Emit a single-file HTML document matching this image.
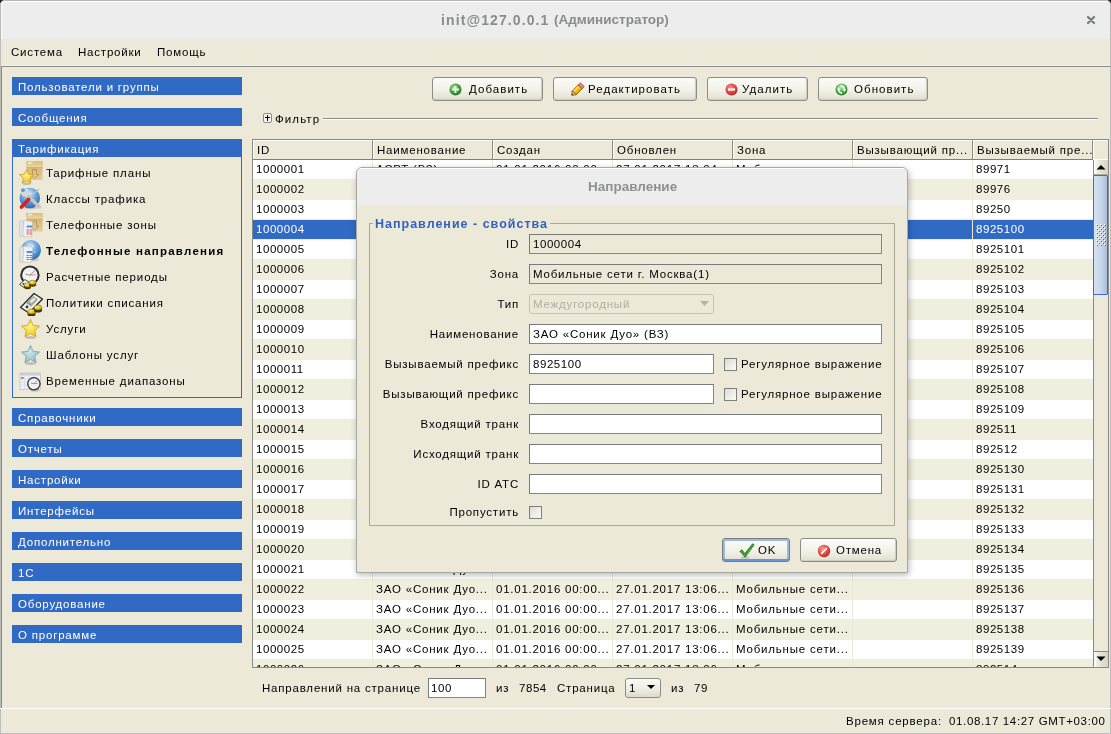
<!DOCTYPE html>
<html><head><meta charset="utf-8">
<style>
*{box-sizing:border-box;margin:0;padding:0}
html,body{width:1111px;height:734px;overflow:hidden;background:#1c1c1c}
body{font-family:"Liberation Sans",sans-serif;font-size:11.5px;letter-spacing:0.8px;color:#000;position:relative}
.a{position:absolute}
.t{position:absolute;white-space:pre;line-height:14px}
.d{letter-spacing:0.55px}
#win{position:absolute;left:0;top:0;width:1111px;height:734px;background:#ECE9D8;border-radius:5px 5px 0 0;overflow:hidden;will-change:transform}
#title{position:absolute;left:0;top:0;width:1111px;height:39px;background:#EDEDED;border:1px solid #b5b5b5;border-bottom:0;border-radius:5px 5px 0 0;box-shadow:inset 1px 1px 0 #fff}
.bar{position:absolute;left:12px;width:230px;height:18px;background:#316AC5;color:#fff}
.bar span{position:absolute;left:6px;top:3px;white-space:pre;line-height:14px}
.btn{position:absolute;height:24px;border:1px solid #8d8d86;border-radius:3px;background:linear-gradient(#fbfbf8,#f3f1e8 55%,#e2dfd1);box-shadow:inset -1px -1px 1px #cfcbbb}
.btn span{position:absolute;white-space:pre;top:4px;line-height:14px;letter-spacing:1.05px}
.btn svg{position:absolute}
.hd{position:absolute;top:140px;height:20px;background:#ECE9D8;border-bottom:1px solid #7f7f7a;border-right:1px solid #8a8a84;box-shadow:inset 1px 1px 0 #fff}
.hd span{position:absolute;left:4px;top:3px;white-space:pre;line-height:14px}
.row{position:absolute;left:0;width:840px;height:20px;border-bottom:1px solid #EFEDDC}
.row span{position:absolute;top:2px;white-space:pre;line-height:14px}
.vl{position:absolute;top:0;width:1px;height:507px;background:#ECE9D8}
.tf{position:absolute;height:20px;background:#fff;border:1px solid #7a7a7a;border-right-color:#858585;border-bottom-color:#858585}
.tf span{position:absolute;left:3px;top:2px;white-space:pre;line-height:14px}
.lbl{position:absolute;white-space:pre;line-height:14px;text-align:right}
.cb{position:absolute;width:13px;height:13px;border:1px solid #7f7f7c;background:linear-gradient(135deg,#dedbd0,#fcfcfa)}
</style></head><body>
<div id="win">
<div id="title"></div>
<div class="t" style="left:441px;top:13px;font-weight:bold;font-size:14px;letter-spacing:1.1px;color:#8a8c8c">init@127.0.0.1</div>
<div class="t" style="left:554px;top:13px;font-weight:bold;font-size:13.5px;letter-spacing:0px;color:#8a8c8c">(Администратор)</div>
<svg class="a" style="left:1086px;top:15px" width="10" height="10" viewBox="0 0 10 10"><path d="M2 2L8 8M8 2L2 8" stroke="#7b7e7e" stroke-width="2.3" stroke-linecap="round"/></svg>
<div class="t" style="left:11px;top:45px">Система</div>
<div class="t" style="left:78px;top:45px">Настройки</div>
<div class="t" style="left:157px;top:45px">Помощь</div>
<div class="a" style="left:0;top:65px;width:1111px;height:1px;background:#f7f5ea"></div>
<div class="a" style="left:1px;top:66px;width:1110px;height:1px;background:#8a8a8a"></div>
<div class="a" style="left:1px;top:66px;width:1px;height:642px;background:#8a8a8a"></div>
<div class="a" style="left:0;top:39px;width:1px;height:695px;background:#bdbdbd"></div>
<div class="a" style="left:1110px;top:39px;width:1px;height:695px;background:#bdbdbd"></div>
<div class="a" style="left:0;top:708px;width:1111px;height:1px;background:#fff"></div>
<div class="a" style="left:0;top:733px;width:1111px;height:1px;background:#bdbdbd"></div>
<div class="bar" style="top:77px"><span>Пользователи и группы</span></div>
<div class="bar" style="top:108px"><span>Сообщения</span></div>
<div class="bar" style="top:139px"><span>Тарификация</span></div>
<div class="a" style="left:12px;top:157px;width:230px;height:241px;border:1px solid #316AC5;border-top:0"></div>
<div class="bar" style="top:408px"><span>Справочники</span></div>
<div class="bar" style="top:439px"><span>Отчеты</span></div>
<div class="bar" style="top:470px"><span>Настройки</span></div>
<div class="bar" style="top:501px"><span>Интерфейсы</span></div>
<div class="bar" style="top:532px"><span>Дополнительно</span></div>
<div class="bar" style="top:563px"><span>1С</span></div>
<div class="bar" style="top:594px"><span>Оборудование</span></div>
<div class="bar" style="top:625px"><span>О программе</span></div>
<div class="t" style="left:46px;top:166px;letter-spacing:0.85px">Тарифные планы</div>
<div class="t" style="left:46px;top:192px;letter-spacing:0.85px">Классы трафика</div>
<div class="t" style="left:46px;top:218px;letter-spacing:0.85px">Телефонные зоны</div>
<div class="t" style="left:46px;top:244px;font-weight:bold;letter-spacing:1.22px">Телефонные направления</div>
<div class="t" style="left:46px;top:270px;letter-spacing:0.85px">Расчетные периоды</div>
<div class="t" style="left:46px;top:296px;letter-spacing:0.85px">Политики списания</div>
<div class="t" style="left:46px;top:322px;letter-spacing:0.85px">Услуги</div>
<div class="t" style="left:46px;top:348px;letter-spacing:0.85px">Шаблоны услуг</div>
<div class="t" style="left:46px;top:374px;letter-spacing:0.85px">Временные диапазоны</div>
<svg class="a" style="left:18px;top:160px" width="26" height="26" viewBox="0 0 26 26"><defs><linearGradient id="bxf" x1="0" y1="0" x2="0" y2="1"><stop offset="0" stop-color="#d2ad68"/><stop offset="1" stop-color="#e6cd95"/></linearGradient><linearGradient id="bxt" x1="0" y1="0" x2="0" y2="1"><stop offset="0" stop-color="#d9b979"/><stop offset="1" stop-color="#efd9a6"/></linearGradient><radialGradient id="glb" cx="0.45" cy="0.3" r="0.75"><stop offset="0" stop-color="#d5ecfb"/><stop offset="0.45" stop-color="#6aa7dc"/><stop offset="1" stop-color="#2563ad"/></radialGradient><radialGradient id="sty" cx="0.45" cy="0.35" r="0.7"><stop offset="0" stop-color="#fdf48a"/><stop offset="1" stop-color="#ecc818"/></radialGradient><radialGradient id="stt" cx="0.45" cy="0.35" r="0.7"><stop offset="0" stop-color="#cfe6ea"/><stop offset="1" stop-color="#8cb9c0"/></radialGradient><radialGradient id="coin" cx="0.4" cy="0.35" r="0.7"><stop offset="0" stop-color="#fbef6a"/><stop offset="1" stop-color="#c9a20a"/></radialGradient></defs><rect x="8.5" y="1.5" width="16" height="18.5" fill="url(#bxf)"/><rect x="8.5" y="1.5" width="16" height="6" fill="url(#bxt)"/><path d="M8.5 7.5h16" stroke="#c8a561" stroke-width="0.6"/><rect x="10.0" y="2.3" width="4.5" height="1.6" fill="#eeeae0"/><path d="M14.5 9.5v5h-2.5l4.5 4 4.5-4h-2.5v-5z" fill="none" stroke="#a88a50" stroke-width="0.7"/><ellipse cx="8.6" cy="23.75" rx="4.125" ry="1.3" fill="rgba(0,0,0,0.2)"/><polygon points="8.60,9.50 10.67,14.15 15.73,14.68 11.95,18.09 13.01,23.07 8.60,20.52 4.19,23.07 5.25,18.09 1.47,14.68 6.53,14.15" fill="url(#sty)" stroke="#d9a21c" stroke-width="0.9" stroke-linejoin="round"/></svg>
<svg class="a" style="left:18px;top:186px" width="26" height="26" viewBox="0 0 26 26"><defs><linearGradient id="bxf" x1="0" y1="0" x2="0" y2="1"><stop offset="0" stop-color="#d2ad68"/><stop offset="1" stop-color="#e6cd95"/></linearGradient><linearGradient id="bxt" x1="0" y1="0" x2="0" y2="1"><stop offset="0" stop-color="#d9b979"/><stop offset="1" stop-color="#efd9a6"/></linearGradient><radialGradient id="glb" cx="0.45" cy="0.3" r="0.75"><stop offset="0" stop-color="#d5ecfb"/><stop offset="0.45" stop-color="#6aa7dc"/><stop offset="1" stop-color="#2563ad"/></radialGradient><radialGradient id="sty" cx="0.45" cy="0.35" r="0.7"><stop offset="0" stop-color="#fdf48a"/><stop offset="1" stop-color="#ecc818"/></radialGradient><radialGradient id="stt" cx="0.45" cy="0.35" r="0.7"><stop offset="0" stop-color="#cfe6ea"/><stop offset="1" stop-color="#8cb9c0"/></radialGradient><radialGradient id="coin" cx="0.4" cy="0.35" r="0.7"><stop offset="0" stop-color="#fbef6a"/><stop offset="1" stop-color="#c9a20a"/></radialGradient></defs><ellipse cx="12.8" cy="21.8" rx="7.21" ry="1.5" fill="rgba(0,0,0,0.15)"/><circle cx="11.8" cy="12" r="10.3" fill="url(#glb)"/><circle cx="13.8" cy="8" r="0.8" fill="#fff"/><circle cx="15.8" cy="14" r="0.7" fill="#fff"/><path d="M9 9L21.5 21" stroke="#c5c5c5" stroke-width="3.4" stroke-linecap="round"/><circle cx="7" cy="6.5" r="4" fill="#d8d8d8"/><circle cx="5" cy="4.2" r="1.9" fill="#5d9ad8"/><path d="M12 11L21 3" stroke="#bdbdbd" stroke-width="1.4"/><path d="M3.5 21L10.5 13.5" stroke="#e01f1f" stroke-width="3.8" stroke-linecap="round"/></svg>
<svg class="a" style="left:18px;top:212px" width="26" height="26" viewBox="0 0 26 26"><defs><linearGradient id="bxf" x1="0" y1="0" x2="0" y2="1"><stop offset="0" stop-color="#d2ad68"/><stop offset="1" stop-color="#e6cd95"/></linearGradient><linearGradient id="bxt" x1="0" y1="0" x2="0" y2="1"><stop offset="0" stop-color="#d9b979"/><stop offset="1" stop-color="#efd9a6"/></linearGradient><radialGradient id="glb" cx="0.45" cy="0.3" r="0.75"><stop offset="0" stop-color="#d5ecfb"/><stop offset="0.45" stop-color="#6aa7dc"/><stop offset="1" stop-color="#2563ad"/></radialGradient><radialGradient id="sty" cx="0.45" cy="0.35" r="0.7"><stop offset="0" stop-color="#fdf48a"/><stop offset="1" stop-color="#ecc818"/></radialGradient><radialGradient id="stt" cx="0.45" cy="0.35" r="0.7"><stop offset="0" stop-color="#cfe6ea"/><stop offset="1" stop-color="#8cb9c0"/></radialGradient><radialGradient id="coin" cx="0.4" cy="0.35" r="0.7"><stop offset="0" stop-color="#fbef6a"/><stop offset="1" stop-color="#c9a20a"/></radialGradient></defs><rect x="8.5" y="1" width="16" height="18.5" fill="url(#bxf)"/><rect x="8.5" y="1" width="16" height="6" fill="url(#bxt)"/><path d="M8.5 7h16" stroke="#c8a561" stroke-width="0.6"/><rect x="10.0" y="1.8" width="4.5" height="1.6" fill="#eeeae0"/><path d="M14.5 9v5h-2.5l4.5 4 4.5-4h-2.5v-5z" fill="none" stroke="#a88a50" stroke-width="0.7"/><path d="M1.7 10.0q1.5-1.5 4 -1 v15 q-2 1-4 0z" fill="#e4e5e8" stroke="#b5b7bb" stroke-width="0.6"/><path d="M5.7 8.5l9 1-1 15.5-9-0.5z" fill="#eef0f3" stroke="#b9bcc1" stroke-width="0.6"/><path d="M8.7 13.5h5.5v2h-5.5z" fill="#4d8fe0"/><path d="M8.7 18.0h2M11.7 18.0h2M8.7 20.0h2M11.7 20.0h2M8.7 22.0h2M11.7 22.0h2" stroke="#e23a3a" stroke-width="1.2"/></svg>
<svg class="a" style="left:18px;top:238px" width="26" height="26" viewBox="0 0 26 26"><defs><linearGradient id="bxf" x1="0" y1="0" x2="0" y2="1"><stop offset="0" stop-color="#d2ad68"/><stop offset="1" stop-color="#e6cd95"/></linearGradient><linearGradient id="bxt" x1="0" y1="0" x2="0" y2="1"><stop offset="0" stop-color="#d9b979"/><stop offset="1" stop-color="#efd9a6"/></linearGradient><radialGradient id="glb" cx="0.45" cy="0.3" r="0.75"><stop offset="0" stop-color="#d5ecfb"/><stop offset="0.45" stop-color="#6aa7dc"/><stop offset="1" stop-color="#2563ad"/></radialGradient><radialGradient id="sty" cx="0.45" cy="0.35" r="0.7"><stop offset="0" stop-color="#fdf48a"/><stop offset="1" stop-color="#ecc818"/></radialGradient><radialGradient id="stt" cx="0.45" cy="0.35" r="0.7"><stop offset="0" stop-color="#cfe6ea"/><stop offset="1" stop-color="#8cb9c0"/></radialGradient><radialGradient id="coin" cx="0.4" cy="0.35" r="0.7"><stop offset="0" stop-color="#fbef6a"/><stop offset="1" stop-color="#c9a20a"/></radialGradient></defs><ellipse cx="13.9" cy="21.7" rx="7.069999999999999" ry="1.5" fill="rgba(0,0,0,0.15)"/><circle cx="12.9" cy="12.1" r="10.1" fill="url(#glb)"/><circle cx="14.9" cy="8.1" r="0.8" fill="#fff"/><circle cx="16.9" cy="14.1" r="0.7" fill="#fff"/><path d="M1.7 9.5q1.5-1.5 4 -1 v15 q-2 1-4 0z" fill="#e4e5e8" stroke="#b5b7bb" stroke-width="0.6"/><path d="M5.7 8l9 1-1 15.5-9-0.5z" fill="#eef0f3" stroke="#b9bcc1" stroke-width="0.6"/><path d="M8.7 13h5.5v2h-5.5z" fill="#4d8fe0"/><path d="M8.7 17.5h2M11.7 17.5h2M8.7 19.5h2M11.7 19.5h2M8.7 21.5h2M11.7 21.5h2" stroke="#e23a3a" stroke-width="1.2"/></svg>
<svg class="a" style="left:18px;top:264px" width="26" height="26" viewBox="0 0 26 26"><defs><linearGradient id="bxf" x1="0" y1="0" x2="0" y2="1"><stop offset="0" stop-color="#d2ad68"/><stop offset="1" stop-color="#e6cd95"/></linearGradient><linearGradient id="bxt" x1="0" y1="0" x2="0" y2="1"><stop offset="0" stop-color="#d9b979"/><stop offset="1" stop-color="#efd9a6"/></linearGradient><radialGradient id="glb" cx="0.45" cy="0.3" r="0.75"><stop offset="0" stop-color="#d5ecfb"/><stop offset="0.45" stop-color="#6aa7dc"/><stop offset="1" stop-color="#2563ad"/></radialGradient><radialGradient id="sty" cx="0.45" cy="0.35" r="0.7"><stop offset="0" stop-color="#fdf48a"/><stop offset="1" stop-color="#ecc818"/></radialGradient><radialGradient id="stt" cx="0.45" cy="0.35" r="0.7"><stop offset="0" stop-color="#cfe6ea"/><stop offset="1" stop-color="#8cb9c0"/></radialGradient><radialGradient id="coin" cx="0.4" cy="0.35" r="0.7"><stop offset="0" stop-color="#fbef6a"/><stop offset="1" stop-color="#c9a20a"/></radialGradient></defs><ellipse cx="12.9" cy="20.9" rx="6.789999999999999" ry="1.3" fill="rgba(0,0,0,0.15)"/><circle cx="11.9" cy="11.2" r="9.7" fill="#2e2e2e"/><circle cx="11.9" cy="11.2" r="7.699999999999999" fill="#f2f2f2"/><path d="M11.9 11.2L17.235 6.35M11.9 11.2L7.535 10.229999999999999" stroke="#666" stroke-width="0.7"/><path d="M11.9 11.2L17.72 10.715" stroke="#d44" stroke-width="0.6"/><path d="M1.5 20.5L7 15.5 11.5 18.5 6 23.5z" fill="#eef1ea" stroke="#333" stroke-width="0.9"/><circle cx="5.5" cy="20" r="1" fill="#333"/><path d="M6 21v2a3.5 2.2 0 0 0 7 0v-2z" fill="#3b3300"/><ellipse cx="9.5" cy="21" rx="3.5" ry="2.2" fill="url(#coin)" stroke="#7a6200" stroke-width="0.5"/><path d="M11 18.5v2a3.5 2.2 0 0 0 7 0v-2z" fill="#3b3300"/><ellipse cx="14.5" cy="18.5" rx="3.5" ry="2.2" fill="url(#coin)" stroke="#7a6200" stroke-width="0.5"/></svg>
<svg class="a" style="left:18px;top:290px" width="26" height="26" viewBox="0 0 26 26"><defs><linearGradient id="bxf" x1="0" y1="0" x2="0" y2="1"><stop offset="0" stop-color="#d2ad68"/><stop offset="1" stop-color="#e6cd95"/></linearGradient><linearGradient id="bxt" x1="0" y1="0" x2="0" y2="1"><stop offset="0" stop-color="#d9b979"/><stop offset="1" stop-color="#efd9a6"/></linearGradient><radialGradient id="glb" cx="0.45" cy="0.3" r="0.75"><stop offset="0" stop-color="#d5ecfb"/><stop offset="0.45" stop-color="#6aa7dc"/><stop offset="1" stop-color="#2563ad"/></radialGradient><radialGradient id="sty" cx="0.45" cy="0.35" r="0.7"><stop offset="0" stop-color="#fdf48a"/><stop offset="1" stop-color="#ecc818"/></radialGradient><radialGradient id="stt" cx="0.45" cy="0.35" r="0.7"><stop offset="0" stop-color="#cfe6ea"/><stop offset="1" stop-color="#8cb9c0"/></radialGradient><radialGradient id="coin" cx="0.4" cy="0.35" r="0.7"><stop offset="0" stop-color="#fbef6a"/><stop offset="1" stop-color="#c9a20a"/></radialGradient></defs><path d="M2.5 17.5L16 3.5 24.5 9 11 23z" fill="#eef1ea" stroke="#262626" stroke-width="1.3" stroke-linejoin="round"/><path d="M8 13L15 6 20 9.5 13 16.5z" fill="#9a9c96"/><path d="M11 11.5L15.5 7.5 18 9.2 13.5 13.5z" fill="#dfe3da"/><circle cx="9" cy="17" r="1.4" fill="#333"/><path d="M9.5 21.5v2.5a4 2.6 0 0 0 8 0v-2.5z" fill="#3b3300"/><ellipse cx="13.5" cy="21.5" rx="4" ry="2.6" fill="url(#coin)" stroke="#7a6200" stroke-width="0.5"/><path d="M16 17.5v2.5a4 2.6 0 0 0 8 0v-2.5z" fill="#3b3300"/><ellipse cx="20" cy="17.5" rx="4" ry="2.6" fill="url(#coin)" stroke="#7a6200" stroke-width="0.5"/></svg>
<svg class="a" style="left:18px;top:316px" width="26" height="26" viewBox="0 0 26 26"><defs><linearGradient id="bxf" x1="0" y1="0" x2="0" y2="1"><stop offset="0" stop-color="#d2ad68"/><stop offset="1" stop-color="#e6cd95"/></linearGradient><linearGradient id="bxt" x1="0" y1="0" x2="0" y2="1"><stop offset="0" stop-color="#d9b979"/><stop offset="1" stop-color="#efd9a6"/></linearGradient><radialGradient id="glb" cx="0.45" cy="0.3" r="0.75"><stop offset="0" stop-color="#d5ecfb"/><stop offset="0.45" stop-color="#6aa7dc"/><stop offset="1" stop-color="#2563ad"/></radialGradient><radialGradient id="sty" cx="0.45" cy="0.35" r="0.7"><stop offset="0" stop-color="#fdf48a"/><stop offset="1" stop-color="#ecc818"/></radialGradient><radialGradient id="stt" cx="0.45" cy="0.35" r="0.7"><stop offset="0" stop-color="#cfe6ea"/><stop offset="1" stop-color="#8cb9c0"/></radialGradient><radialGradient id="coin" cx="0.4" cy="0.35" r="0.7"><stop offset="0" stop-color="#fbef6a"/><stop offset="1" stop-color="#c9a20a"/></radialGradient></defs><ellipse cx="12.5" cy="21.55" rx="5.2250000000000005" ry="1.3" fill="rgba(0,0,0,0.2)"/><polygon points="12.50,3.50 15.12,9.39 21.54,10.06 16.75,14.38 18.08,20.69 12.50,17.46 6.92,20.69 8.25,14.38 3.46,10.06 9.88,9.39" fill="url(#sty)" stroke="#d9a21c" stroke-width="0.9" stroke-linejoin="round"/></svg>
<svg class="a" style="left:18px;top:342px" width="26" height="26" viewBox="0 0 26 26"><defs><linearGradient id="bxf" x1="0" y1="0" x2="0" y2="1"><stop offset="0" stop-color="#d2ad68"/><stop offset="1" stop-color="#e6cd95"/></linearGradient><linearGradient id="bxt" x1="0" y1="0" x2="0" y2="1"><stop offset="0" stop-color="#d9b979"/><stop offset="1" stop-color="#efd9a6"/></linearGradient><radialGradient id="glb" cx="0.45" cy="0.3" r="0.75"><stop offset="0" stop-color="#d5ecfb"/><stop offset="0.45" stop-color="#6aa7dc"/><stop offset="1" stop-color="#2563ad"/></radialGradient><radialGradient id="sty" cx="0.45" cy="0.35" r="0.7"><stop offset="0" stop-color="#fdf48a"/><stop offset="1" stop-color="#ecc818"/></radialGradient><radialGradient id="stt" cx="0.45" cy="0.35" r="0.7"><stop offset="0" stop-color="#cfe6ea"/><stop offset="1" stop-color="#8cb9c0"/></radialGradient><radialGradient id="coin" cx="0.4" cy="0.35" r="0.7"><stop offset="0" stop-color="#fbef6a"/><stop offset="1" stop-color="#c9a20a"/></radialGradient></defs><ellipse cx="12.5" cy="21.55" rx="5.2250000000000005" ry="1.3" fill="rgba(0,0,0,0.2)"/><polygon points="12.50,3.50 15.12,9.39 21.54,10.06 16.75,14.38 18.08,20.69 12.50,17.46 6.92,20.69 8.25,14.38 3.46,10.06 9.88,9.39" fill="url(#stt)" stroke="#79a5ab" stroke-width="0.9" stroke-linejoin="round"/></svg>
<svg class="a" style="left:18px;top:368px" width="26" height="26" viewBox="0 0 26 26"><defs><linearGradient id="bxf" x1="0" y1="0" x2="0" y2="1"><stop offset="0" stop-color="#d2ad68"/><stop offset="1" stop-color="#e6cd95"/></linearGradient><linearGradient id="bxt" x1="0" y1="0" x2="0" y2="1"><stop offset="0" stop-color="#d9b979"/><stop offset="1" stop-color="#efd9a6"/></linearGradient><radialGradient id="glb" cx="0.45" cy="0.3" r="0.75"><stop offset="0" stop-color="#d5ecfb"/><stop offset="0.45" stop-color="#6aa7dc"/><stop offset="1" stop-color="#2563ad"/></radialGradient><radialGradient id="sty" cx="0.45" cy="0.35" r="0.7"><stop offset="0" stop-color="#fdf48a"/><stop offset="1" stop-color="#ecc818"/></radialGradient><radialGradient id="stt" cx="0.45" cy="0.35" r="0.7"><stop offset="0" stop-color="#cfe6ea"/><stop offset="1" stop-color="#8cb9c0"/></radialGradient><radialGradient id="coin" cx="0.4" cy="0.35" r="0.7"><stop offset="0" stop-color="#fbef6a"/><stop offset="1" stop-color="#c9a20a"/></radialGradient></defs><rect x="2" y="5" width="20.5" height="16.5" fill="#eef0f7" stroke="#b9bdc8" stroke-width="0.7"/><rect x="2" y="5" width="20.5" height="2.5" fill="#c9cdd8"/><path d="M2 11h20.5M2 14h20.5M2 17h20.5M6.5 7.5v14M11 7.5v14M15.5 7.5v14" stroke="#d2d6e0" stroke-width="0.6"/><rect x="3" y="9" width="2.6" height="1.8" fill="#f06060"/><ellipse cx="16.9" cy="22.5" rx="4.76" ry="1.3" fill="rgba(0,0,0,0.15)"/><circle cx="15.9" cy="15.7" r="6.8" fill="#2e2e2e"/><circle cx="15.9" cy="15.7" r="5.5" fill="#f2f2f2"/><path d="M15.9 15.7L19.64 12.299999999999999M15.9 15.7L12.84 15.02" stroke="#666" stroke-width="0.7"/><path d="M15.9 15.7L19.98 15.36" stroke="#d44" stroke-width="0.6"/></svg>
<div class="btn" style="left:432px;top:77px;width:111px"><svg style="left:16px;top:5px" width="13" height="13" viewBox="0 0 13 13"><defs><radialGradient id="g1" cx="0.4" cy="0.35" r="0.7"><stop offset="0" stop-color="#b9e8a8"/><stop offset="0.5" stop-color="#48a843"/><stop offset="1" stop-color="#1d7424"/></radialGradient></defs><circle cx="6.5" cy="6.5" r="6" fill="url(#g1)"/><path d="M6.5 3v7M3 6.5h7" stroke="#f4f4f4" stroke-width="1.8"/></svg><span style="left:36px">Добавить</span></div>
<div class="btn" style="left:553px;top:77px;width:144px"><svg style="left:15px;top:4px" width="16" height="16" viewBox="0 0 16 16"><defs><linearGradient id="pg" x1="0" y1="0" x2="0" y2="1"><stop offset="0" stop-color="#fff27a"/><stop offset="0.5" stop-color="#f7c600"/><stop offset="1" stop-color="#e0a000"/></linearGradient></defs><g transform="rotate(-45 8 8)"><path d="M4 5.3h8.5v5.4H4z" fill="url(#pg)" stroke="#8a5a00" stroke-width="0.9"/><path d="M12.5 5.3h2.2a0.8 0.8 0 0 1 0.8 0.8v3.8a0.8 0.8 0 0 1-0.8 0.8h-2.2z" fill="#f47ad0" stroke="#8a5a00" stroke-width="0.9"/><path d="M4 5.3L0.6 8 4 10.7z" fill="#f3dc9a" stroke="#8a5a00" stroke-width="0.9" stroke-linejoin="round"/><path d="M0.6 8L1.9 7v2z" fill="#223"/></g></svg><span style="left:34px">Редактировать</span></div>
<div class="btn" style="left:707px;top:77px;width:101px"><svg style="left:17px;top:5px" width="13" height="13" viewBox="0 0 13 13"><defs><radialGradient id="g2" cx="0.4" cy="0.35" r="0.7"><stop offset="0" stop-color="#ff8a8a"/><stop offset="1" stop-color="#c01818"/></radialGradient></defs><circle cx="6.5" cy="6.5" r="6" fill="url(#g2)"/><path d="M3 6.5h7" stroke="#fff" stroke-width="2.2"/></svg><span style="left:34px">Удалить</span></div>
<div class="btn" style="left:818px;top:77px;width:110px"><svg style="left:16px;top:5px" width="13" height="13" viewBox="0 0 13 13"><defs><radialGradient id="g3" cx="0.45" cy="0.3" r="0.75"><stop offset="0" stop-color="#c6eeb8"/><stop offset="0.5" stop-color="#4fb04a"/><stop offset="1" stop-color="#1d7424"/></radialGradient></defs><circle cx="6.5" cy="6.5" r="6" fill="url(#g3)"/><path d="M3.6 6.2A3.3 3.3 0 0 0 7.2 10" stroke="#fff" stroke-width="1.5" fill="none"/><path d="M1.9 6.8L3.6 4 5.3 6.8z" fill="#fff"/><path d="M9.4 6.8A3.3 3.3 0 0 0 5.8 3" stroke="#fff" stroke-width="1.5" fill="none"/><path d="M7.7 6.2L9.4 9 11.1 6.2z" fill="#fff"/></svg><span style="left:35px">Обновить</span></div>
<div class="a" style="left:263px;top:113px;width:9px;height:10px;border:1px solid #8a8a8a;border-radius:2px;background:#f4f3ee"></div>
<div class="a" style="left:265px;top:117px;width:5px;height:1px;background:#000"></div>
<div class="a" style="left:267px;top:115px;width:1px;height:6px;background:#000"></div>
<div class="t" style="left:275px;top:112px;letter-spacing:1.1px">Фильтр</div>
<div class="a" style="left:323px;top:118px;width:775px;height:1px;background:#8a8a8a"></div>
<div class="a" style="left:323px;top:119px;width:775px;height:1px;background:#fff"></div>
<div class="a" style="left:252px;top:139px;width:857px;height:529px;border:1px solid #8a8a84;background:#fff"></div>
<div class="a" style="left:1092px;top:140px;width:16px;height:527px;background:#ECE9D8"></div>
<div class="hd" style="left:253px;width:120px"><span>ID</span></div>
<div class="hd" style="left:373px;width:120px"><span>Наименование</span></div>
<div class="hd" style="left:493px;width:120px"><span>Создан</span></div>
<div class="hd" style="left:613px;width:120px"><span>Обновлен</span></div>
<div class="hd" style="left:733px;width:120px"><span>Зона</span></div>
<div class="hd" style="left:853px;width:120px"><span>Вызывающий пр...</span></div>
<div class="hd" style="left:973px;width:120px"><span>Вызываемый пре...</span></div>
<div class="hd" style="left:1093px;width:15px;border-right:0;border-bottom-color:#fff"></div>
<div class="a" style="left:253px;top:160px;width:840px;height:507px;overflow:hidden">
<div class="row" style="top:0px;background:#fff;color:#000"><span class="d" style="left:3px">1000001</span><span style="left:123px">АСРТ (ВЗ)</span><span style="left:243px;letter-spacing:0.75px">01.01.2016 00:00...</span><span style="left:363px;letter-spacing:0.75px">27.01.2017 13:04...</span><span style="left:483px">Моб...</span><span class="d" style="left:723px">89971</span></div>
<div class="row" style="top:20px;background:#F0EEDC;color:#000"><span class="d" style="left:3px">1000002</span><span style="left:123px">ЗАО «Соник Дуо...</span><span style="left:243px;letter-spacing:0.75px">01.01.2016 00:00...</span><span style="left:363px;letter-spacing:0.75px">27.01.2017 13:06...</span><span style="left:483px">Мобильные сети...</span><span class="d" style="left:723px">89976</span></div>
<div class="row" style="top:40px;background:#fff;color:#000"><span class="d" style="left:3px">1000003</span><span style="left:123px">ЗАО «Соник Дуо...</span><span style="left:243px;letter-spacing:0.75px">01.01.2016 00:00...</span><span style="left:363px;letter-spacing:0.75px">27.01.2017 13:06...</span><span style="left:483px">Мобильные сети...</span><span class="d" style="left:723px">89250</span></div>
<div class="row" style="top:60px;background:#316AC5;color:#fff"><span class="d" style="left:3px">1000004</span><span style="left:123px">ЗАО «Соник Дуо...</span><span style="left:243px;letter-spacing:0.75px">01.01.2016 00:00...</span><span style="left:363px;letter-spacing:0.75px">27.01.2017 13:06...</span><span style="left:483px">Мобильные сети...</span><span class="d" style="left:723px">8925100</span></div>
<div class="row" style="top:80px;background:#fff;color:#000"><span class="d" style="left:3px">1000005</span><span style="left:123px">ЗАО «Соник Дуо...</span><span style="left:243px;letter-spacing:0.75px">01.01.2016 00:00...</span><span style="left:363px;letter-spacing:0.75px">27.01.2017 13:06...</span><span style="left:483px">Мобильные сети...</span><span class="d" style="left:723px">8925101</span></div>
<div class="row" style="top:100px;background:#F0EEDC;color:#000"><span class="d" style="left:3px">1000006</span><span style="left:123px">ЗАО «Соник Дуо...</span><span style="left:243px;letter-spacing:0.75px">01.01.2016 00:00...</span><span style="left:363px;letter-spacing:0.75px">27.01.2017 13:06...</span><span style="left:483px">Мобильные сети...</span><span class="d" style="left:723px">8925102</span></div>
<div class="row" style="top:120px;background:#fff;color:#000"><span class="d" style="left:3px">1000007</span><span style="left:123px">ЗАО «Соник Дуо...</span><span style="left:243px;letter-spacing:0.75px">01.01.2016 00:00...</span><span style="left:363px;letter-spacing:0.75px">27.01.2017 13:06...</span><span style="left:483px">Мобильные сети...</span><span class="d" style="left:723px">8925103</span></div>
<div class="row" style="top:140px;background:#F0EEDC;color:#000"><span class="d" style="left:3px">1000008</span><span style="left:123px">ЗАО «Соник Дуо...</span><span style="left:243px;letter-spacing:0.75px">01.01.2016 00:00...</span><span style="left:363px;letter-spacing:0.75px">27.01.2017 13:06...</span><span style="left:483px">Мобильные сети...</span><span class="d" style="left:723px">8925104</span></div>
<div class="row" style="top:160px;background:#fff;color:#000"><span class="d" style="left:3px">1000009</span><span style="left:123px">ЗАО «Соник Дуо...</span><span style="left:243px;letter-spacing:0.75px">01.01.2016 00:00...</span><span style="left:363px;letter-spacing:0.75px">27.01.2017 13:06...</span><span style="left:483px">Мобильные сети...</span><span class="d" style="left:723px">8925105</span></div>
<div class="row" style="top:180px;background:#F0EEDC;color:#000"><span class="d" style="left:3px">1000010</span><span style="left:123px">ЗАО «Соник Дуо...</span><span style="left:243px;letter-spacing:0.75px">01.01.2016 00:00...</span><span style="left:363px;letter-spacing:0.75px">27.01.2017 13:06...</span><span style="left:483px">Мобильные сети...</span><span class="d" style="left:723px">8925106</span></div>
<div class="row" style="top:200px;background:#fff;color:#000"><span class="d" style="left:3px">1000011</span><span style="left:123px">ЗАО «Соник Дуо...</span><span style="left:243px;letter-spacing:0.75px">01.01.2016 00:00...</span><span style="left:363px;letter-spacing:0.75px">27.01.2017 13:06...</span><span style="left:483px">Мобильные сети...</span><span class="d" style="left:723px">8925107</span></div>
<div class="row" style="top:220px;background:#F0EEDC;color:#000"><span class="d" style="left:3px">1000012</span><span style="left:123px">ЗАО «Соник Дуо...</span><span style="left:243px;letter-spacing:0.75px">01.01.2016 00:00...</span><span style="left:363px;letter-spacing:0.75px">27.01.2017 13:06...</span><span style="left:483px">Мобильные сети...</span><span class="d" style="left:723px">8925108</span></div>
<div class="row" style="top:240px;background:#fff;color:#000"><span class="d" style="left:3px">1000013</span><span style="left:123px">ЗАО «Соник Дуо...</span><span style="left:243px;letter-spacing:0.75px">01.01.2016 00:00...</span><span style="left:363px;letter-spacing:0.75px">27.01.2017 13:06...</span><span style="left:483px">Мобильные сети...</span><span class="d" style="left:723px">8925109</span></div>
<div class="row" style="top:260px;background:#F0EEDC;color:#000"><span class="d" style="left:3px">1000014</span><span style="left:123px">ЗАО «Соник Дуо...</span><span style="left:243px;letter-spacing:0.75px">01.01.2016 00:00...</span><span style="left:363px;letter-spacing:0.75px">27.01.2017 13:06...</span><span style="left:483px">Мобильные сети...</span><span class="d" style="left:723px">892511</span></div>
<div class="row" style="top:280px;background:#fff;color:#000"><span class="d" style="left:3px">1000015</span><span style="left:123px">ЗАО «Соник Дуо...</span><span style="left:243px;letter-spacing:0.75px">01.01.2016 00:00...</span><span style="left:363px;letter-spacing:0.75px">27.01.2017 13:06...</span><span style="left:483px">Мобильные сети...</span><span class="d" style="left:723px">892512</span></div>
<div class="row" style="top:300px;background:#F0EEDC;color:#000"><span class="d" style="left:3px">1000016</span><span style="left:123px">ЗАО «Соник Дуо...</span><span style="left:243px;letter-spacing:0.75px">01.01.2016 00:00...</span><span style="left:363px;letter-spacing:0.75px">27.01.2017 13:06...</span><span style="left:483px">Мобильные сети...</span><span class="d" style="left:723px">8925130</span></div>
<div class="row" style="top:320px;background:#fff;color:#000"><span class="d" style="left:3px">1000017</span><span style="left:123px">ЗАО «Соник Дуо...</span><span style="left:243px;letter-spacing:0.75px">01.01.2016 00:00...</span><span style="left:363px;letter-spacing:0.75px">27.01.2017 13:06...</span><span style="left:483px">Мобильные сети...</span><span class="d" style="left:723px">8925131</span></div>
<div class="row" style="top:340px;background:#F0EEDC;color:#000"><span class="d" style="left:3px">1000018</span><span style="left:123px">ЗАО «Соник Дуо...</span><span style="left:243px;letter-spacing:0.75px">01.01.2016 00:00...</span><span style="left:363px;letter-spacing:0.75px">27.01.2017 13:06...</span><span style="left:483px">Мобильные сети...</span><span class="d" style="left:723px">8925132</span></div>
<div class="row" style="top:360px;background:#fff;color:#000"><span class="d" style="left:3px">1000019</span><span style="left:123px">ЗАО «Соник Дуо...</span><span style="left:243px;letter-spacing:0.75px">01.01.2016 00:00...</span><span style="left:363px;letter-spacing:0.75px">27.01.2017 13:06...</span><span style="left:483px">Мобильные сети...</span><span class="d" style="left:723px">8925133</span></div>
<div class="row" style="top:380px;background:#F0EEDC;color:#000"><span class="d" style="left:3px">1000020</span><span style="left:123px">ЗАО «Соник Дуо...</span><span style="left:243px;letter-spacing:0.75px">01.01.2016 00:00...</span><span style="left:363px;letter-spacing:0.75px">27.01.2017 13:06...</span><span style="left:483px">Мобильные сети...</span><span class="d" style="left:723px">8925134</span></div>
<div class="row" style="top:400px;background:#fff;color:#000"><span class="d" style="left:3px">1000021</span><span style="left:123px">ЗАО «Соник Дуо...</span><span style="left:243px;letter-spacing:0.75px">01.01.2016 00:00...</span><span style="left:363px;letter-spacing:0.75px">27.01.2017 13:06...</span><span style="left:483px">Мобильные сети...</span><span class="d" style="left:723px">8925135</span></div>
<div class="row" style="top:420px;background:#F0EEDC;color:#000"><span class="d" style="left:3px">1000022</span><span style="left:123px">ЗАО «Соник Дуо...</span><span style="left:243px;letter-spacing:0.75px">01.01.2016 00:00...</span><span style="left:363px;letter-spacing:0.75px">27.01.2017 13:06...</span><span style="left:483px">Мобильные сети...</span><span class="d" style="left:723px">8925136</span></div>
<div class="row" style="top:440px;background:#fff;color:#000"><span class="d" style="left:3px">1000023</span><span style="left:123px">ЗАО «Соник Дуо...</span><span style="left:243px;letter-spacing:0.75px">01.01.2016 00:00...</span><span style="left:363px;letter-spacing:0.75px">27.01.2017 13:06...</span><span style="left:483px">Мобильные сети...</span><span class="d" style="left:723px">8925137</span></div>
<div class="row" style="top:460px;background:#F0EEDC;color:#000"><span class="d" style="left:3px">1000024</span><span style="left:123px">ЗАО «Соник Дуо...</span><span style="left:243px;letter-spacing:0.75px">01.01.2016 00:00...</span><span style="left:363px;letter-spacing:0.75px">27.01.2017 13:06...</span><span style="left:483px">Мобильные сети...</span><span class="d" style="left:723px">8925138</span></div>
<div class="row" style="top:480px;background:#fff;color:#000"><span class="d" style="left:3px">1000025</span><span style="left:123px">ЗАО «Соник Дуо...</span><span style="left:243px;letter-spacing:0.75px">01.01.2016 00:00...</span><span style="left:363px;letter-spacing:0.75px">27.01.2017 13:06...</span><span style="left:483px">Мобильные сети...</span><span class="d" style="left:723px">8925139</span></div>
<div class="row" style="top:500px;background:#F0EEDC;color:#000"><span class="d" style="left:3px">1000026</span><span style="left:123px">ЗАО «Соник Дуо...</span><span style="left:243px;letter-spacing:0.75px">01.01.2016 00:00...</span><span style="left:363px;letter-spacing:0.75px">27.01.2017 13:06...</span><span style="left:483px">Мобильные сети...</span><span class="d" style="left:723px">892514</span></div>
<div class="vl" style="left:119px"></div>
<div class="vl" style="left:239px"></div>
<div class="vl" style="left:359px"></div>
<div class="vl" style="left:479px"></div>
<div class="vl" style="left:599px"></div>
<div class="vl" style="left:719px"></div>
</div>
<div class="a" style="left:1093px;top:160px;width:15px;height:507px;background:#ECE9D8;border-left:1px solid #8a8a84"></div>
<div class="a" style="left:1094px;top:160px;width:14px;height:15px;background:linear-gradient(90deg,#fff,#ECE9D8 30%,#d8d4c4);border-bottom:1px solid #b0ad9f"></div>
<svg class="a" style="left:1096px;top:164px" width="10" height="6"><path d="M0.5 5.5L5 1 9.5 5.5z" fill="#000"/></svg>
<div class="a" style="left:1094px;top:651px;width:14px;height:16px;background:linear-gradient(90deg,#fff,#ECE9D8 30%,#d8d4c4);border-top:1px solid #8a8a84"></div>
<svg class="a" style="left:1096px;top:656px" width="10" height="6"><path d="M0.5 0.5L5 5 9.5 0.5z" fill="#000"/></svg>
<div class="a" style="left:1093px;top:175px;width:15px;height:120px;border:1px solid #3d6dd0;border-radius:1px;background:linear-gradient(90deg,#d6e2f2,#c4d3ea 60%,#a9bcd9)"></div>
<svg class="a" style="left:1093px;top:215px" width="16" height="40"><rect x="3" y="9" width="1" height="1" fill="#fff"/><rect x="4" y="10" width="1" height="1" fill="#3d6cd0"/><rect x="7" y="9" width="1" height="1" fill="#fff"/><rect x="8" y="10" width="1" height="1" fill="#3d6cd0"/><rect x="11" y="9" width="1" height="1" fill="#fff"/><rect x="12" y="10" width="1" height="1" fill="#3d6cd0"/><rect x="5" y="11" width="1" height="1" fill="#fff"/><rect x="6" y="12" width="1" height="1" fill="#3d6cd0"/><rect x="9" y="11" width="1" height="1" fill="#fff"/><rect x="10" y="12" width="1" height="1" fill="#3d6cd0"/><rect x="3" y="13" width="1" height="1" fill="#fff"/><rect x="4" y="14" width="1" height="1" fill="#3d6cd0"/><rect x="7" y="13" width="1" height="1" fill="#fff"/><rect x="8" y="14" width="1" height="1" fill="#3d6cd0"/><rect x="11" y="13" width="1" height="1" fill="#fff"/><rect x="12" y="14" width="1" height="1" fill="#3d6cd0"/><rect x="5" y="15" width="1" height="1" fill="#fff"/><rect x="6" y="16" width="1" height="1" fill="#3d6cd0"/><rect x="9" y="15" width="1" height="1" fill="#fff"/><rect x="10" y="16" width="1" height="1" fill="#3d6cd0"/><rect x="3" y="17" width="1" height="1" fill="#fff"/><rect x="4" y="18" width="1" height="1" fill="#3d6cd0"/><rect x="7" y="17" width="1" height="1" fill="#fff"/><rect x="8" y="18" width="1" height="1" fill="#3d6cd0"/><rect x="11" y="17" width="1" height="1" fill="#fff"/><rect x="12" y="18" width="1" height="1" fill="#3d6cd0"/><rect x="5" y="19" width="1" height="1" fill="#fff"/><rect x="6" y="20" width="1" height="1" fill="#3d6cd0"/><rect x="9" y="19" width="1" height="1" fill="#fff"/><rect x="10" y="20" width="1" height="1" fill="#3d6cd0"/><rect x="3" y="21" width="1" height="1" fill="#fff"/><rect x="4" y="22" width="1" height="1" fill="#3d6cd0"/><rect x="7" y="21" width="1" height="1" fill="#fff"/><rect x="8" y="22" width="1" height="1" fill="#3d6cd0"/><rect x="11" y="21" width="1" height="1" fill="#fff"/><rect x="12" y="22" width="1" height="1" fill="#3d6cd0"/><rect x="5" y="23" width="1" height="1" fill="#fff"/><rect x="6" y="24" width="1" height="1" fill="#3d6cd0"/><rect x="9" y="23" width="1" height="1" fill="#fff"/><rect x="10" y="24" width="1" height="1" fill="#3d6cd0"/><rect x="3" y="25" width="1" height="1" fill="#fff"/><rect x="4" y="26" width="1" height="1" fill="#3d6cd0"/><rect x="7" y="25" width="1" height="1" fill="#fff"/><rect x="8" y="26" width="1" height="1" fill="#3d6cd0"/><rect x="11" y="25" width="1" height="1" fill="#fff"/><rect x="12" y="26" width="1" height="1" fill="#3d6cd0"/><rect x="5" y="27" width="1" height="1" fill="#fff"/><rect x="6" y="28" width="1" height="1" fill="#3d6cd0"/><rect x="9" y="27" width="1" height="1" fill="#fff"/><rect x="10" y="28" width="1" height="1" fill="#3d6cd0"/><rect x="3" y="29" width="1" height="1" fill="#fff"/><rect x="4" y="30" width="1" height="1" fill="#3d6cd0"/><rect x="7" y="29" width="1" height="1" fill="#fff"/><rect x="8" y="30" width="1" height="1" fill="#3d6cd0"/><rect x="11" y="29" width="1" height="1" fill="#fff"/><rect x="12" y="30" width="1" height="1" fill="#3d6cd0"/></svg>
<div class="t" style="left:262px;top:681px">Направлений на странице</div>
<div class="tf" style="left:428px;top:678px;width:58px"><span class="d" style="left:2px">100</span></div>
<div class="t" style="left:496px;top:681px">из</div>
<div class="t d" style="left:519px;top:681px">7854</div>
<div class="t" style="left:557px;top:681px">Страница</div>
<div class="a" style="left:625px;top:678px;width:36px;height:20px;border:1px solid #8d8d86;border-radius:3px;background:linear-gradient(#fbfbf8,#eeece2 60%,#dcd9cb)"></div>
<div class="t d" style="left:629px;top:681px">1</div>
<svg class="a" style="left:647px;top:685px" width="8" height="5"><path d="M0 0L4 4 8 0z" fill="#000"/></svg>
<div class="t" style="left:671px;top:681px">из</div>
<div class="t d" style="left:694px;top:681px">79</div>
<div class="t" style="left:846px;top:714px">Время сервера:</div>
<div class="t d" style="left:949px;top:714px;letter-spacing:0.65px">01.08.17 14:27 GMT+03:00</div>
<div class="a" style="left:356px;top:167px;width:552px;height:406px;background:#ECE9D8;border:1px solid #a9a9a4;border-radius:6px 6px 0 0;overflow:hidden;box-shadow:1px 2px 6px rgba(0,0,0,0.28)">
<div class="a" style="left:0;top:0;width:551px;height:38px;background:#EDEDED;box-shadow:inset 0 1px 0 #fff"></div>
</div>
<div class="t" style="left:588px;top:180px;font-weight:bold;font-size:13.5px;letter-spacing:0px;color:#8f9090">Направление</div>
<div class="a" style="left:369px;top:223px;width:526px;height:303px;border:1px solid #a9a899"></div>
<div class="t" style="left:373px;top:217px;padding:0 2px;background:#ECE9D8;font-weight:bold;font-size:12.5px;letter-spacing:1px;color:#2F62C6">Направление - свойства</div>
<div class="lbl" style="right:592px;top:237px">ID</div>
<div class="lbl" style="right:592px;top:267px">Зона</div>
<div class="lbl" style="right:592px;top:297px">Тип</div>
<div class="lbl" style="right:592px;top:327px">Наименование</div>
<div class="lbl" style="right:592px;top:357px">Вызываемый префикс</div>
<div class="lbl" style="right:592px;top:387px">Вызывающий префикс</div>
<div class="lbl" style="right:592px;top:417px">Входящий транк</div>
<div class="lbl" style="right:592px;top:447px">Исходящий транк</div>
<div class="lbl" style="right:592px;top:477px">ID АТС</div>
<div class="tf" style="left:529px;top:234px;width:353px;background:#ECE9D8"><span class="d">1000004</span></div>
<div class="tf" style="left:529px;top:264px;width:353px;background:#ECE9D8"><span>Мобильные сети г. Москва(1)</span></div>
<div class="a" style="left:529px;top:294px;width:185px;height:20px;border:1px solid #c5c3b8;border-radius:3px;background:#ECE9D8"></div>
<div class="t" style="left:533px;top:297px;color:#b0aea4">Междугородный</div>
<svg class="a" style="left:700px;top:301px" width="9" height="5"><path d="M0 0L4.5 5 9 0z" fill="#b5b3a9"/></svg>
<div class="tf" style="left:529px;top:324px;width:353px"><span>ЗАО «Соник Дуо» (ВЗ)</span></div>
<div class="tf" style="left:529px;top:354px;width:185px"><span class="d">8925100</span></div>
<div class="tf" style="left:529px;top:384px;width:185px"></div>
<div class="tf" style="left:529px;top:414px;width:353px"></div>
<div class="tf" style="left:529px;top:444px;width:353px"></div>
<div class="tf" style="left:529px;top:474px;width:353px"></div>
<div class="cb" style="left:724px;top:358px"></div>
<div class="t" style="left:741px;top:357px">Регулярное выражение</div>
<div class="cb" style="left:724px;top:388px"></div>
<div class="t" style="left:741px;top:387px">Регулярное выражение</div>
<div class="lbl" style="right:592px;top:505px">Пропустить</div>
<div class="cb" style="left:529px;top:506px"></div>
<div class="btn" style="left:722px;top:538px;width:68px;border-color:#7d7d78;box-shadow:inset 0 -2px 0 #6592d8, inset 0 0 0 2px #9bb9e6"><svg style="left:16px;top:4px" width="16" height="16" viewBox="0 0 16 16"><ellipse cx="6" cy="14.5" rx="4" ry="1" fill="rgba(0,0,0,0.2)"/><path d="M0.8 8.2L3 6.8 5.8 10.6 13.6 0.8 15.2 1.8 6.2 14.2z" fill="#3fa534" stroke="#1f6e1c" stroke-width="0.7" stroke-linejoin="round"/></svg><span style="left:35px;letter-spacing:0.8px">OK</span></div>
<div class="btn" style="left:800px;top:538px;width:97px"><svg style="left:16px;top:5px" width="14" height="14" viewBox="0 0 14 14"><defs><radialGradient id="g4" cx="0.4" cy="0.35" r="0.7"><stop offset="0" stop-color="#ff9a8a"/><stop offset="1" stop-color="#c41a1a"/></radialGradient></defs><circle cx="7" cy="7" r="6.2" fill="url(#g4)"/><path d="M4.2 9.8L9.8 4.2" stroke="#fff" stroke-width="1.7"/></svg><span style="left:35px;letter-spacing:0.8px">Отмена</span></div>
</div></body></html>
